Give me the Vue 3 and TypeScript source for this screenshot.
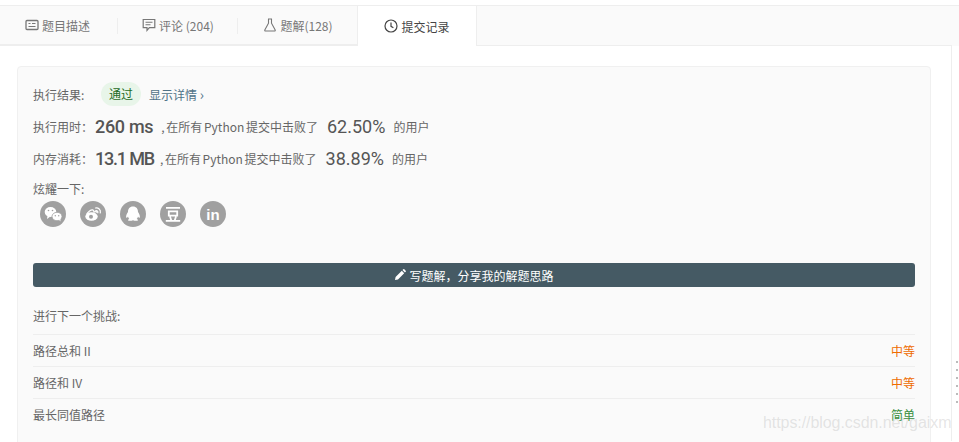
<script setup lang="ts">
// submission result panel
const tabs = [
  { key: 'desc', label: '题目描述', active: false },
  { key: 'comment', label: '评论 (204)', active: false },
  { key: 'solution', label: '题解(128)', active: false },
  { key: 'submit', label: '提交记录', active: true },
]

const stats = [
  { label: '执行用时', value: '260 ms', percent: '62.50%', cls: 'stat-time' },
  { label: '内存消耗', value: '13.1 MB', percent: '38.89%', cls: 'stat-mem' },
]

const shares = ['wechat', 'weibo', 'qq', 'douban', 'linkedin']

const nextList = [
  { title: '路径总和 II', level: '中等', cls: 'medium' },
  { title: '路径和 IV', level: '中等', cls: 'medium' },
  { title: '最长同值路径', level: '简单', cls: 'easy' },
]
</script>

<template>
  <div class="page">
    <div class="tabs">
      <div
        v-for="(tab, i) in tabs"
        :key="tab.key"
        class="tab"
        :class="['tab-' + tab.key, { active: tab.active, sep: i < 2 }]"
      >
        <svg v-if="tab.key === 'desc'" class="tab-icon" viewBox="0 0 14 14" fill="none" stroke="currentColor">
          <rect x="1" y="2.500" width="12" height="9" rx="1" stroke-width="1.300" />
          <path d="M3.500 5.500h2M3.500 8.500h7M7 5.500h3.500" stroke-width="1.100" />
        </svg>
        <svg v-else-if="tab.key === 'comment'" class="tab-icon" viewBox="0 0 14 14" fill="none" stroke="currentColor">
          <path d="M1.200 1.500h11.600v8.200H7.400L5 12.400V9.700H1.200z" stroke-width="1.200" />
          <path d="M3.500 4.200h7M3.500 6.800h5" stroke-width="1.100" />
        </svg>
        <svg v-else-if="tab.key === 'solution'" class="tab-icon" viewBox="0 0 14 14" fill="none" stroke="currentColor">
          <path d="M5 1h4M5.500 1v4.200L1.800 12a.7.7 0 0 0 .6 1h9.200a.7.7 0 0 0 .6-1L8.500 5.200V1" stroke-width="1.100" />
        </svg>
        <svg v-else class="tab-icon" viewBox="0 0 14 14" fill="none" stroke="currentColor">
          <circle cx="7" cy="7" r="6" stroke-width="1.200" />
          <path d="M7 3.500V7.300l2.400 1.500" stroke-width="1.200" />
        </svg>
        <span>{{ tab.label }}</span>
      </div>
    </div>

    <div class="body">
      <div class="card">
        <div class="result-row">
          <span class="label">执行结果:</span>
          <span class="pass">通过</span>
          <span class="detail">显示详情 <i class="arrow">›</i></span>
        </div>

        <div v-for="s in stats" :key="s.label" class="stat" :class="s.cls">
          <span class="stat-label">{{ s.label }}：</span>
          <b class="stat-value">{{ s.value }}</b>
          <span class="stat-text">, 在所有 Python 提交中击败了</span>
          <b class="stat-percent">{{ s.percent }}</b>
          <span class="stat-tail">的用户</span>
        </div>

        <div class="share-title">炫耀一下:</div>
        <div class="shares">
          <span v-for="name in shares" :key="name" class="share">
            <svg v-if="name === 'wechat'" viewBox="0 0 26 26" fill="#fff">
              <ellipse cx="10.500" cy="11" rx="5.800" ry="5" />
              <path d="M7.500 14.500 7 18l3.300-2.500z" />
              <circle cx="8.500" cy="9.500" r=".8" fill="#a0a0a0" />
              <circle cx="12.500" cy="9.500" r=".8" fill="#a0a0a0" />
              <ellipse cx="17" cy="15.500" rx="5" ry="4.200" stroke="#a0a0a0" stroke-width="0.800" />
              <path d="M18.800 18.500l1.700 2-.2-3z" />
              <circle cx="15.300" cy="14.800" r=".7" fill="#a0a0a0" />
              <circle cx="18.700" cy="14.800" r=".7" fill="#a0a0a0" />
            </svg>
            <svg v-else-if="name === 'weibo'" viewBox="0 0 26 26" fill="none">
              <ellipse cx="11.500" cy="15.500" rx="6.200" ry="4.300" fill="#fff" />
              <path d="M6.500 13.500c1.500-3 4.500-5 6.500-4.500 1.300.4.800 2 1 2 1.500-.6 3-.5 3 .8" stroke="#fff" stroke-width="1.300" />
              <circle cx="11" cy="15.800" r="2" fill="#a0a0a0" />
              <path d="M15.500 7c2.800-.5 5.500 1.500 4.800 5M15.800 9.600c1.400-.2 2.400.9 2 2.200" stroke="#fff" stroke-width="1.200" stroke-linecap="round" />
            </svg>
            <svg v-else-if="name === 'qq'" viewBox="0 0 26 26" fill="#fff">
              <path d="M13 5.500c3.400 0 5 2.400 5 5.500 1.100 1.600 2.300 3.800 1.800 5.500-.4.900-1.300-.3-1.800-1.100-.2 1.100-.8 2-1.300 2.500 1.100.4 1.600 1.100 1.100 1.600-.9.500-3.300.4-4.800-.3-1.500.7-3.900.8-4.800.3-.5-.5 0-1.200 1.100-1.600-.5-.5-1.100-1.400-1.300-2.500-.5.800-1.400 2-1.800 1.100-.5-1.700.7-3.900 1.800-5.500 0-3.100 1.600-5.500 5-5.500z" />
            </svg>
            <svg v-else-if="name === 'douban'" viewBox="0 0 26 26" fill="none" stroke="#fff" stroke-width="1.800">
              <path d="M6 6.800h14M8.800 10.300h8.400v4.400H8.800zM5.800 19.800h14.400M10 15.500l1.300 4M16 15.500l-1.300 4" />
            </svg>
            <span v-else class="in">in</span>
          </span>
        </div>

        <button class="write-btn" type="button">
          <svg class="pen" viewBox="0 0 12 12" fill="#fff">
            <path d="M1 11l.6-3L7.800 1.800l2.400 2.400L4 10.400zM8.500 1.100 9.300.3a.7.7 0 0 1 1 0l1.400 1.400a.7.7 0 0 1 0 1l-.8.8z" />
          </svg>
          <span>写题解，分享我的解题思路</span>
        </button>

        <div class="next-title">进行下一个挑战:</div>
        <div v-for="q in nextList" :key="q.title" class="next-row">
          <span class="next-name">{{ q.title }}</span>
          <span class="level" :class="q.cls">{{ q.level }}</span>
        </div>
      </div>
    </div>

    <div class="grip"><i v-for="n in 6" :key="n"></i></div>
    <div class="watermark">https://blog.csdn.net/gaixm</div>
  </div>
</template>

<style scoped>
.page {
  position: relative;
  width: 959px;
  height: 442px;
  padding-top: 5px;
  box-sizing: border-box;
  overflow: hidden;
  background: #fff;
  font-family: "Noto Sans CJK SC", "Liberation Sans", sans-serif;
  font-size: 12px;
  color: #666;
}
.tabs {
  display: flex;
  height: 41px;
  box-sizing: border-box;
  background: #fafafa;
  border-top: 1px solid #eee;
}
.tab {
  position: relative;
  width: 120px;
  height: 39px;
  display: flex;
  align-items: center;
  justify-content: center;
  gap: 3px;
  color: #777;
  box-sizing: border-box;
  border-bottom: 1px solid #eee;
}
.tab-desc {
  width: 118px;
  padding-right: 3px;
}
.tab.sep::after {
  content: "";
  position: absolute;
  right: 0;
  top: 12px;
  height: 16px;
  border-right: 1px solid #eee;
}
.tab.active {
  background: #fff;
  color: #444;
  margin-left: -1px;
  height: 40px;
  border-left: 1px solid #eee;
  border-right: 1px solid #eee;
  border-bottom: 0;
}
.tab-icon {
  width: 14px;
  height: 14px;
  flex: none;
}
.body {
  width: 952px;
  height: 396px;
  box-sizing: border-box;
  padding: 20px 0 0 17px;
  border-top: 1px solid #eee;
  border-right: 1px solid #eee;
  margin-top: -1px;
}
.card {
  width: 914px;
  height: 400px;
  box-sizing: border-box;
  padding: 15px 15px 0 15px;
  background: #fafafa;
  border: 1px solid #f0f0f0;
  border-radius: 4px;
}
.result-row {
  display: flex;
  align-items: center;
  height: 24px;
}
.label {
  width: 68px;
}
.pass {
  width: 40px;
  height: 24px;
  line-height: 24px;
  text-align: center;
  border-radius: 12px;
  background: #e8f5e9;
  color: #1f6b26;
}
.detail {
  margin-left: 8px;
  color: #4f7288;
}
.arrow {
  font-style: normal;
  font-size: 14px;
}
.stat {
  display: flex;
  align-items: center;
  height: 32px;
}
.stat-time { margin-top: 4px; }
.stat-label {
  width: 62px;
}
.stat-value {
  font-family: Roboto, "Liberation Sans", sans-serif;
  font-size: 18px;
  font-weight: 500;
  color: #555;
  margin-right: 8px;
  letter-spacing: -0.3px;
}
.stat-mem .stat-value {
  letter-spacing: -1.2px;
  word-spacing: 0;
  margin-right: 6px;
}
.stat-text {
  word-spacing: -1px;
}
.stat-percent {
  font-family: Roboto, "Liberation Sans", sans-serif;
  font-size: 18px;
  font-weight: 400;
  margin: 0 8px 0 9px;
  color: #555;
}
.share-title {
  margin-top: 6px;
  height: 18px;
  line-height: 18px;
}
.shares {
  display: flex;
  gap: 14px;
  margin: 3px 0 0 7px;
}
.share {
  width: 26px;
  height: 26px;
  border-radius: 50%;
  background: #a0a0a0;
  display: flex;
  align-items: center;
  justify-content: center;
}
.share svg {
  width: 26px;
  height: 26px;
}
.in {
  font-family: "Liberation Sans", sans-serif;
  font-weight: 700;
  font-size: 15px;
  color: #fff;
}
.write-btn {
  display: flex;
  align-items: center;
  justify-content: center;
  gap: 3px;
  width: 882px;
  height: 24px;
  margin-top: 36px;
  padding: 0;
  border: 0;
  border-radius: 3px;
  background: #455a64;
  color: #fff;
  font: inherit;
}
.pen {
  width: 12px;
  height: 12px;
}
.next-title {
  margin-top: 20px;
  height: 18px;
  line-height: 18px;
  margin-bottom: 9px;
}
.next-row {
  display: flex;
  justify-content: space-between;
  align-items: center;
  width: 882px;
  height: 32px;
  border-top: 1px solid #eee;
  box-sizing: border-box;
}
.medium { color: #ef6c00; }
.easy { color: #388e3c; }
.grip {
  position: absolute;
  left: 956px;
  top: 361px;
  display: flex;
  flex-direction: column;
  gap: 6px;
}
.grip i {
  display: block;
  width: 2px;
  height: 2px;
  background: #bbb;
}
.watermark {
  position: absolute;
  left: 763px;
  top: 414px;
  font-family: "Liberation Sans", sans-serif;
  font-size: 16px;
  letter-spacing: -0.07px;
  color: rgba(170, 170, 170, 0.3);
}
</style>

<style>
html, body { margin: 0; background: #fff; }
</style>
